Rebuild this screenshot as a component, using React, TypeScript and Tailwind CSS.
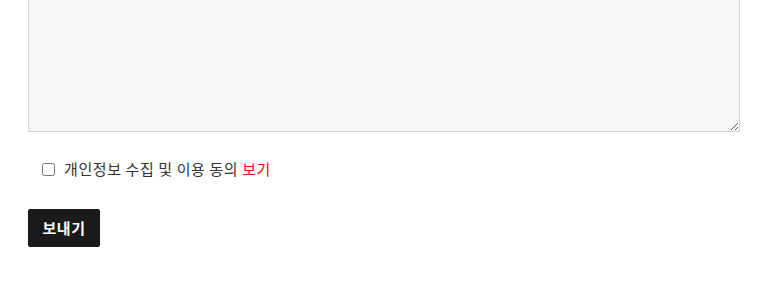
import React from 'react'

export default function App() {
  return (
    <div
      className="bg-white px-[28px] w-[768px] h-[287px]"
      style={{ fontFamily: '"Noto Sans CJK KR", "Noto Sans", sans-serif' }}
    >
      <textarea
        className="block w-full h-[132px] bg-[#f6f6f6] border border-t-0 border-[#d4d4d4] outline-none"
      />

      <label className="flex items-center mt-[29px] ml-[14px] h-[16px] text-[15px] tracking-[0.6px] text-[#333]">
        <input
          type="checkbox"
          className="w-[13px] h-[13px] m-0 mr-[9px]"
        />
        <span>
          개인정보 수집 및 이용 동의 <a className="text-[#ff0000]">보기</a>
        </span>
      </label>

      <button className="mt-[32px] w-[72px] h-[38px] bg-[#1a1a1a] text-white text-[15px] tracking-[0.5px] font-bold rounded-[2px]">
        보내기
      </button>
    </div>
  )
}
